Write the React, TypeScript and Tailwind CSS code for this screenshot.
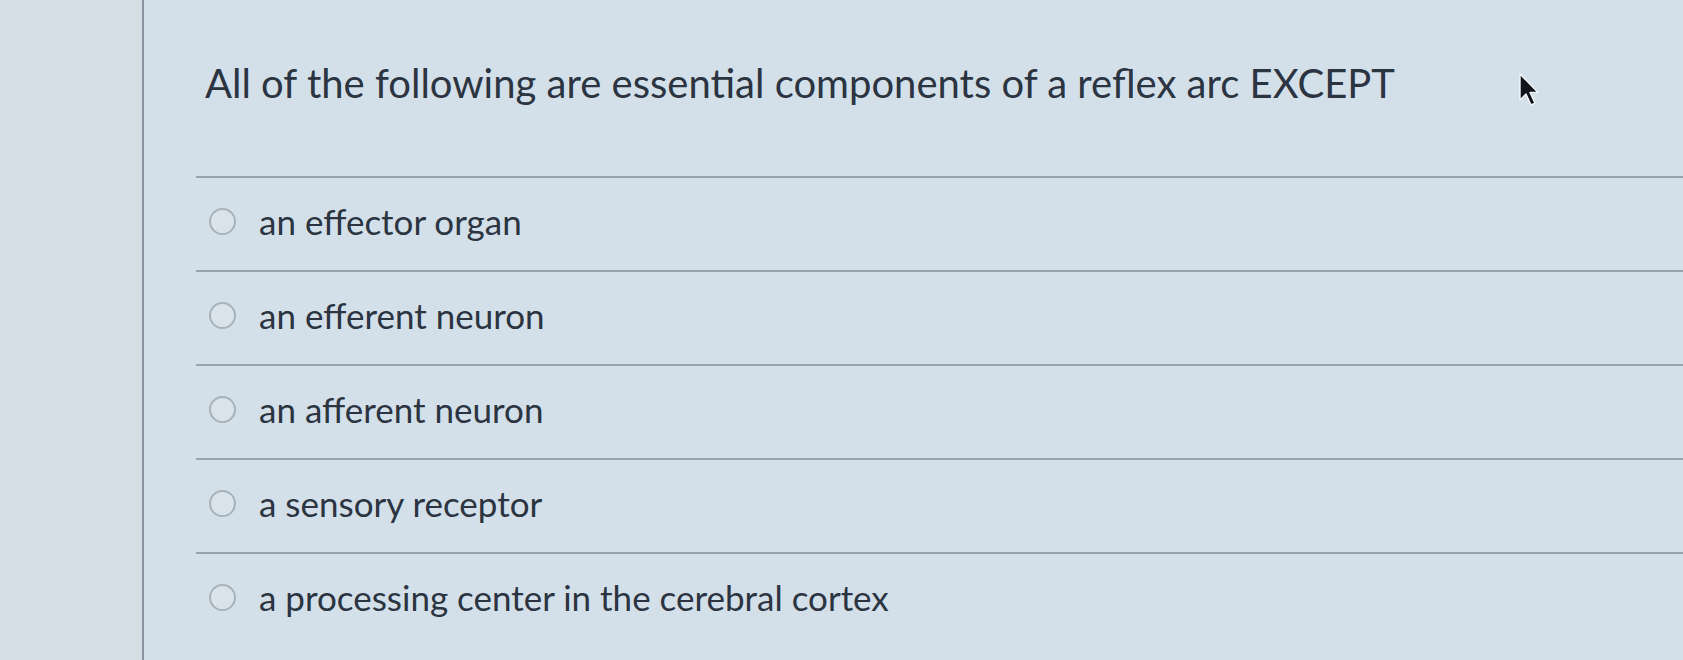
import React from 'react';

const options = [
  'an effector organ',
  'an efferent neuron',
  'an afferent neuron',
  'a sensory receptor',
  'a processing center in the cerebral cortex',
];

const App: React.FC = () => {
  return (
    <div
      className="relative flex w-[1683px] h-[660px] overflow-hidden bg-[#d3e0ea] text-[#2b3440]"
      style={{ fontFamily: 'Lato, "Open Sans", sans-serif' }}
    >
      {/* Left rail */}
      <div className="w-[144px] shrink-0 h-full bg-[#d6dee5] border-r-2 border-[#8794a0]" />

      {/* Question */}
      <div className="flex-1 flex flex-col">
        <h1 className="pl-[61px] pt-[59px] text-[40px] leading-[48px] font-normal">
          All of the following are essential components of a reflex arc EXCEPT
        </h1>

        <div className="mt-[69px] ml-[52px] flex flex-col">
          {options.map((opt) => (
            <label
              key={opt}
              className="h-[94px] pb-[5px] flex items-center border-t-2 border-[#95a3b0] cursor-pointer"
            >
              <span className="ml-[13px] w-[27px] h-[27px] rounded-full border-2 border-[#a9b1b8] bg-[#d8e3eb] shrink-0" />
              <span className="ml-[23px] text-[35px] leading-none">{opt}</span>
            </label>
          ))}
        </div>
      </div>

      {/* Mouse pointer */}
      <svg
        className="absolute left-[1518px] top-[72px]"
        width="24"
        height="36"
        viewBox="0 0 12 18"
      >
        <path
          d="M1 1 L1 14 L4 11 L6.5 16.5 L8.5 15.6 L6 10.2 L10 10.2 Z"
          fill="#111418"
          stroke="#f2f5f7"
          strokeWidth="0.7"
          strokeLinejoin="round"
        />
      </svg>
    </div>
  );
};

export default App;
